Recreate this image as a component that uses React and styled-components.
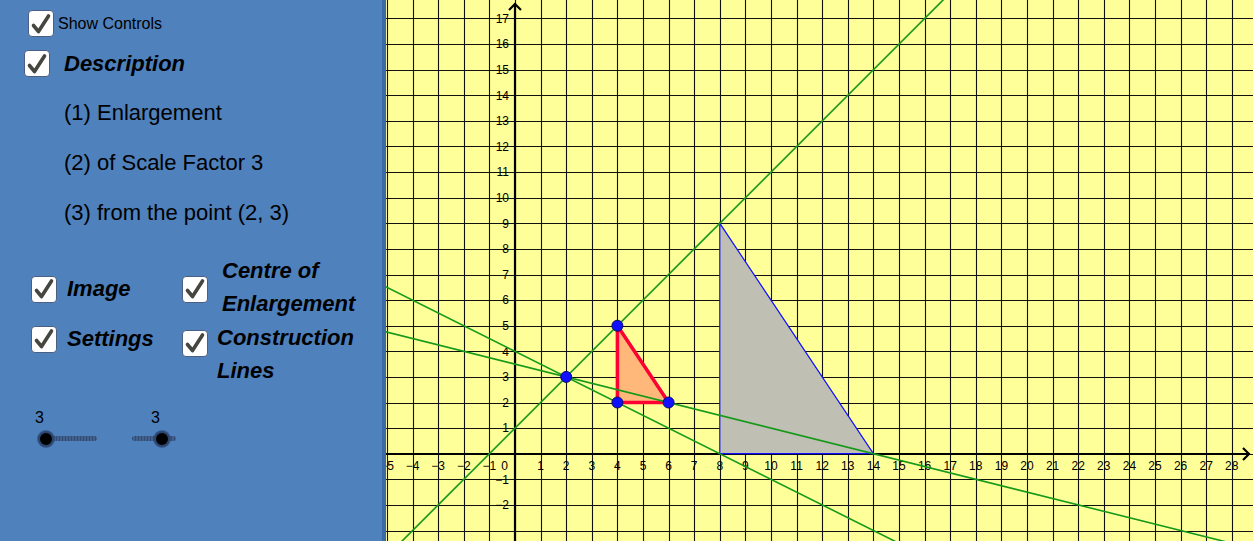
import React from 'react';
import styled, { createGlobalStyle } from 'styled-components';

const GlobalStyle = createGlobalStyle`
    html, body {
        margin: 0;
        padding: 0;
        overflow: hidden;
    }
    body {
        font-family: "Liberation Sans", Arial, sans-serif;
        color: #000;
    }
`;

const Page = styled.div`
    display: flex;
    width: 1253px;
    height: 541px;
`;

const Panel = styled.div`
    width: 382px;
    flex: none;
    background-color: #4f81bd;
    border-right: 4px solid #3d69a6;
    display: flex;
    flex-direction: column;
`;

const Box = styled.span`
    flex: none;
    box-sizing: border-box;
    width: 26px;
    height: 27px;
    margin-top: ${p => p.$top || 0}px;
    border: 1.5px solid #4b5f82;
    border-radius: 4px;
    background: #fff;
    display: flex;
    align-items: center;
    justify-content: center;
`;

const Check = ({ top }) => (
    <Box $top={top}>
        <svg width="22" height="22" viewBox="0 0 22 22">
            <path d="M3.5 12.5 L8.5 18.5 L18.5 3" fill="none" stroke="#45463f" strokeWidth="3.6" strokeLinecap="round" strokeLinejoin="round" />
        </svg>
    </Box>
);

const ShowRow = styled.div`
    display: flex;
    align-items: center;
    gap: 4px;
    height: 27px;
    margin: 10px 0 0 28px;
    font-size: 16px;
`;

const DescRow = styled.div`
    display: flex;
    align-items: center;
    gap: 14px;
    height: 33px;
    margin: 10px 0 0 24px;
`;

const Heading = styled.div`
    font-size: 22px;
    font-weight: bold;
    font-style: italic;
    line-height: 33px;
    margin-top: ${p => p.$top || 0}px;
`;

const DescList = styled.div`
    margin: 8px 0 0 64px;
`;

const DescLine = styled.div`
    font-size: 22px;
    line-height: 50px;
    height: 50px;
`;

const OptionsGrid = styled.div`
    display: grid;
    grid-template-columns: 151px auto;
    row-gap: 1px;
    margin: 16px 0 0 31px;
`;

const Option = styled.div`
    display: flex;
    align-items: flex-start;
    gap: ${p => p.$gap}px;
`;

const SlidersRow = styled.div`
    display: flex;
    gap: 35px;
    margin: 23px 0 0 38px;
`;

const SliderBox = styled.div`
    display: flex;
    flex-direction: column;
    width: ${p => p.$width}px;
`;

const SliderValue = styled.div`
    font-size: 16px;
    line-height: 15px;
    height: 15px;
`;

const Track = styled.div`
    position: relative;
    margin-top: 11px;
    height: 5px;
    border-radius: 3px;
    background: repeating-linear-gradient(90deg, #304b76 0 1.5px, #42608c 1.5px 3px);
`;

const Knob = styled.span`
    position: absolute;
    top: 50%;
    width: 12px;
    height: 12px;
    margin: -8px 0 0 -8px;
    border-radius: 50%;
    background: #000;
    border: 2px solid #2c4670;
    box-shadow: 0 0 0 1px rgba(40, 60, 100, 0.5);
`;

const Slider = ({ width, pos, value }) => (
    <SliderBox $width={width}>
        <SliderValue style={{ marginLeft: pos - 11 }}>{value}</SliderValue>
        <Track>
            <Knob style={{ left: pos }} />
        </Track>
    </SliderBox>
);

const GraphArea = styled.div`
    flex: 1;
    background-color: #ffff99;
    overflow: hidden;
`;

const W = 867;
const H = 541;
const U = 25.6;
const X0 = 129;
const Y0 = 453.7;
const sx = x => X0 + x * U;
const sy = y => Y0 - y * U;
const px = v => Math.round(v) + 0.5;
const minus = n => (n < 0 ? '\u2212' + Math.abs(n) : String(n));

const range = (a, b) => Array.from({ length: b - a + 1 }, (_, i) => a + i);

const lines = [
    x => x + 1,
    x => 3.5 - x / 4,
    x => 4 - x / 2,
];

const pts = list => list.map(([x, y]) => `${sx(x)},${sy(y)}`).join(' ');

const Graph = () => {
    const ay = px(Y0) - 0.5;
    const ax = px(X0) - 0.5;
    return (
        <svg width={W} height={H} viewBox={`0 0 ${W} ${H}`} style={{ display: 'block' }}>
            <g stroke="#111" strokeWidth="1.1">
                {range(-6, 30).map(i => (
                    <line key={'v' + i} x1={px(sx(i))} y1="0" x2={px(sx(i))} y2={H} />
                ))}
                {range(-4, 18).map(j => (
                    <line key={'h' + j} x1="0" y1={px(sy(j))} x2={W} y2={px(sy(j))} />
                ))}
            </g>
            <g stroke="#000" strokeWidth="2.2" fill="none">
                <line x1="0" y1={ay} x2={W - 3} y2={ay} />
                <line x1={ax} y1="3" x2={ax} y2={H} />
                <polyline points={`${W - 10},${ay - 6} ${W - 4},${ay} ${W - 10},${ay + 6}`} />
                <polyline points={`${ax - 6},${10} ${ax},${4} ${ax + 6},${10}`} />
            </g>
            <g fontFamily="'Liberation Sans', Arial, sans-serif" fontSize="12" fill="#000">
                {range(-5, 28).filter(i => i !== 0).map(i => (
                    <text key={'xl' + i} x={sx(i)} y={Y0 + 16.5} textAnchor="middle">{minus(i)}</text>
                ))}
                <text x={X0 - 7} y={Y0 + 16.5} textAnchor="end">0</text>
                {range(-2, 17).filter(j => j !== 0).map(j => (
                    <text key={'yl' + j} x={X0 - 6} y={sy(j) + 4.3} textAnchor="end">{minus(j)}</text>
                ))}
            </g>
            <polygon points={pts([[8, 9], [8, 0], [14, 0]])} fill="#bfbfb3" stroke="#1010ff" strokeWidth="1.2" />
            <polygon points={pts([[4, 5], [4, 2], [6, 2]])} fill="#ffb87a" stroke="#ff0033" strokeWidth="3.5" strokeLinejoin="round" />
            <g stroke="#16991a" strokeWidth="1.6">
                {lines.map((f, k) => (
                    <line key={k} x1={sx(-7)} y1={sy(f(-7))} x2={sx(31)} y2={sy(f(31))} />
                ))}
            </g>
            <g fill="#1010ff" stroke="#0a0a66" strokeWidth="1">
                {[[2, 3], [4, 5], [4, 2], [6, 2]].map(([x, y]) => (
                    <circle key={x + '-' + y} cx={sx(x)} cy={sy(y)} r="5.5" />
                ))}
            </g>
        </svg>
    );
};

export default () => (
    <Page>
        <GlobalStyle />
        <Panel>
            <ShowRow>
                <Check />
                <span>Show Controls</span>
            </ShowRow>
            <DescRow>
                <Check />
                <Heading>Description</Heading>
            </DescRow>
            <DescList>
                <DescLine>(1) Enlargement</DescLine>
                <DescLine>(2) of Scale Factor 3</DescLine>
                <DescLine>(3) from the point (2, 3)</DescLine>
            </DescList>
            <OptionsGrid>
                <Option $gap={10}>
                    <Check top={21.5} />
                    <Heading $top={18}>Image</Heading>
                </Option>
                <Option $gap={14}>
                    <Check top={21.5} />
                    <Heading>Centre of<br />Enlargement</Heading>
                </Option>
                <Option $gap={10}>
                    <Check top={4.5} />
                    <Heading $top={1}>Settings</Heading>
                </Option>
                <Option $gap={9}>
                    <Check top={8.5} />
                    <Heading>Construction<br />Lines</Heading>
                </Option>
            </OptionsGrid>
            <SlidersRow>
                <Slider width={59} pos={8} value={3} />
                <Slider width={44} pos={30} value={3} />
            </SlidersRow>
        </Panel>
        <GraphArea>
            <Graph />
        </GraphArea>
    </Page>
);
